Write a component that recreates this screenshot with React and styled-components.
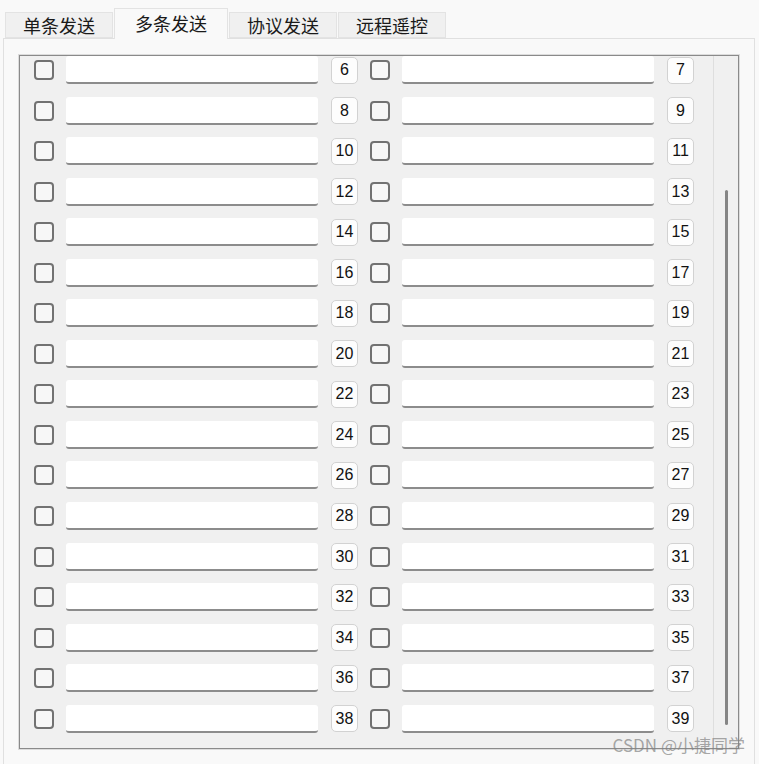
import React from "react";
import styled, { createGlobalStyle } from "styled-components";

const GlobalStyle = createGlobalStyle`
  html, body {
    margin: 0;
    padding: 0;
    background: #f9f9f9;
  }
  * {
    box-sizing: border-box;
  }
`;

const TABS = ["单条发送", "多条发送", "协议发送", "远程遥控"];
const ACTIVE_TAB = 1;

// left column holds even numbers, right column odd ones
const ROWS = Array.from({ length: 17 }, (_, i) => [6 + i * 2, 7 + i * 2]);

function SendPair({ num }) {
  return (
    <Pair>
      <CheckBox />
      <TextField />
      <NumButton>{num}</NumButton>
    </Pair>
  );
}

function App() {
  return (
    <Window>
      <GlobalStyle />
      <TabBar>
        {TABS.map((t, i) => (
          <Tab key={t} $active={i === ACTIVE_TAB}>
            {t}
          </Tab>
        ))}
      </TabBar>
      <Panel>
        <GroupBox>
          <RowList>
            {ROWS.map(([a, b]) => (
              <Row key={a}>
                <SendPair num={a} />
                <SendPair num={b} />
              </Row>
            ))}
          </RowList>
          <ScrollTrack>
            <ScrollThumb />
          </ScrollTrack>
        </GroupBox>
      </Panel>
      <Watermark>CSDN @小捷同学</Watermark>
    </Window>
  );
}

const Window = styled.div`
  position: relative;
  width: 759px;
  height: 764px;
  overflow: hidden;
  background: #f9f9f9;
  font-family: "Noto Sans CJK SC", "Noto Sans", sans-serif;
`;

const TabBar = styled.div`
  display: flex;
  align-items: flex-end;
  gap: 1px;
  height: 38px;
  padding-left: 5px;
  position: relative;
  z-index: 1;
`;

const Tab = styled.div`
  height: ${(p) => (p.$active ? "31px" : "26px")};
  margin-bottom: ${(p) => (p.$active ? "-1px" : "0")};
  padding: ${(p) => (p.$active ? "0 20px 3px" : "0 17px")};
  display: flex;
  align-items: center;
  background: ${(p) => (p.$active ? "#f9f9f9" : "#f0f0f0")};
  border: 1px solid #e3e3e3;
  border-bottom: ${(p) => (p.$active ? "none" : "1px solid #e3e3e3")};
  font-size: 18px;
  line-height: 1;
  color: #1a1a1a;
  white-space: nowrap;
`;

const Panel = styled.div`
  margin-left: 3px;
  width: 752px;
  height: 740px;
  padding: 16px 0 0 15px;
  border: 1px solid #e0e0e0;
  background: #f9f9f9;
`;

const GroupBox = styled.div`
  display: flex;
  width: 720px;
  height: 694px;
  border: 1px solid #8a8a8a;
  box-shadow: 0 0 0 1px #dcdcdc;
  background: #f0f0f0;
  overflow: hidden;
`;

const RowList = styled.div`
  flex: 1;
  padding-left: 14px;
  overflow: hidden;
`;

const Row = styled.div`
  display: flex;
  gap: 12px;
  height: 40.56px;
`;

const Pair = styled.div`
  display: flex;
  align-items: center;
  height: 28px;
`;

const CheckBox = styled.span`
  width: 20px;
  height: 20px;
  border: 2px solid #727272;
  border-radius: 4px;
  background: #f7f7f7;
  margin-right: 12px;
`;

const TextField = styled.span`
  width: 252px;
  height: 28px;
  background: #ffffff;
  border-bottom: 2px solid #8c8c8c;
  border-radius: 3px;
  margin-right: 13px;
`;

const NumButton = styled.span`
  width: 27px;
  height: 27px;
  display: flex;
  align-items: center;
  justify-content: center;
  border: 1px solid #d2d2d2;
  border-radius: 5px;
  background: #fdfdfd;
  font-family: "Liberation Sans", Arial, sans-serif;
  font-size: 16px;
  color: #111;
`;

const ScrollTrack = styled.div`
  width: 25px;
  border-left: 1px solid #dedede;
  display: flex;
  justify-content: center;
  padding-top: 134px;
`;

const ScrollThumb = styled.div`
  width: 3px;
  height: 535px;
  border-radius: 2px;
  background: #858585;
`;

const Watermark = styled.div`
  position: absolute;
  right: 14px;
  bottom: 7px;
  font-size: 17px;
  color: rgba(130, 130, 130, 0.7);
  white-space: nowrap;
`;

export default App;
